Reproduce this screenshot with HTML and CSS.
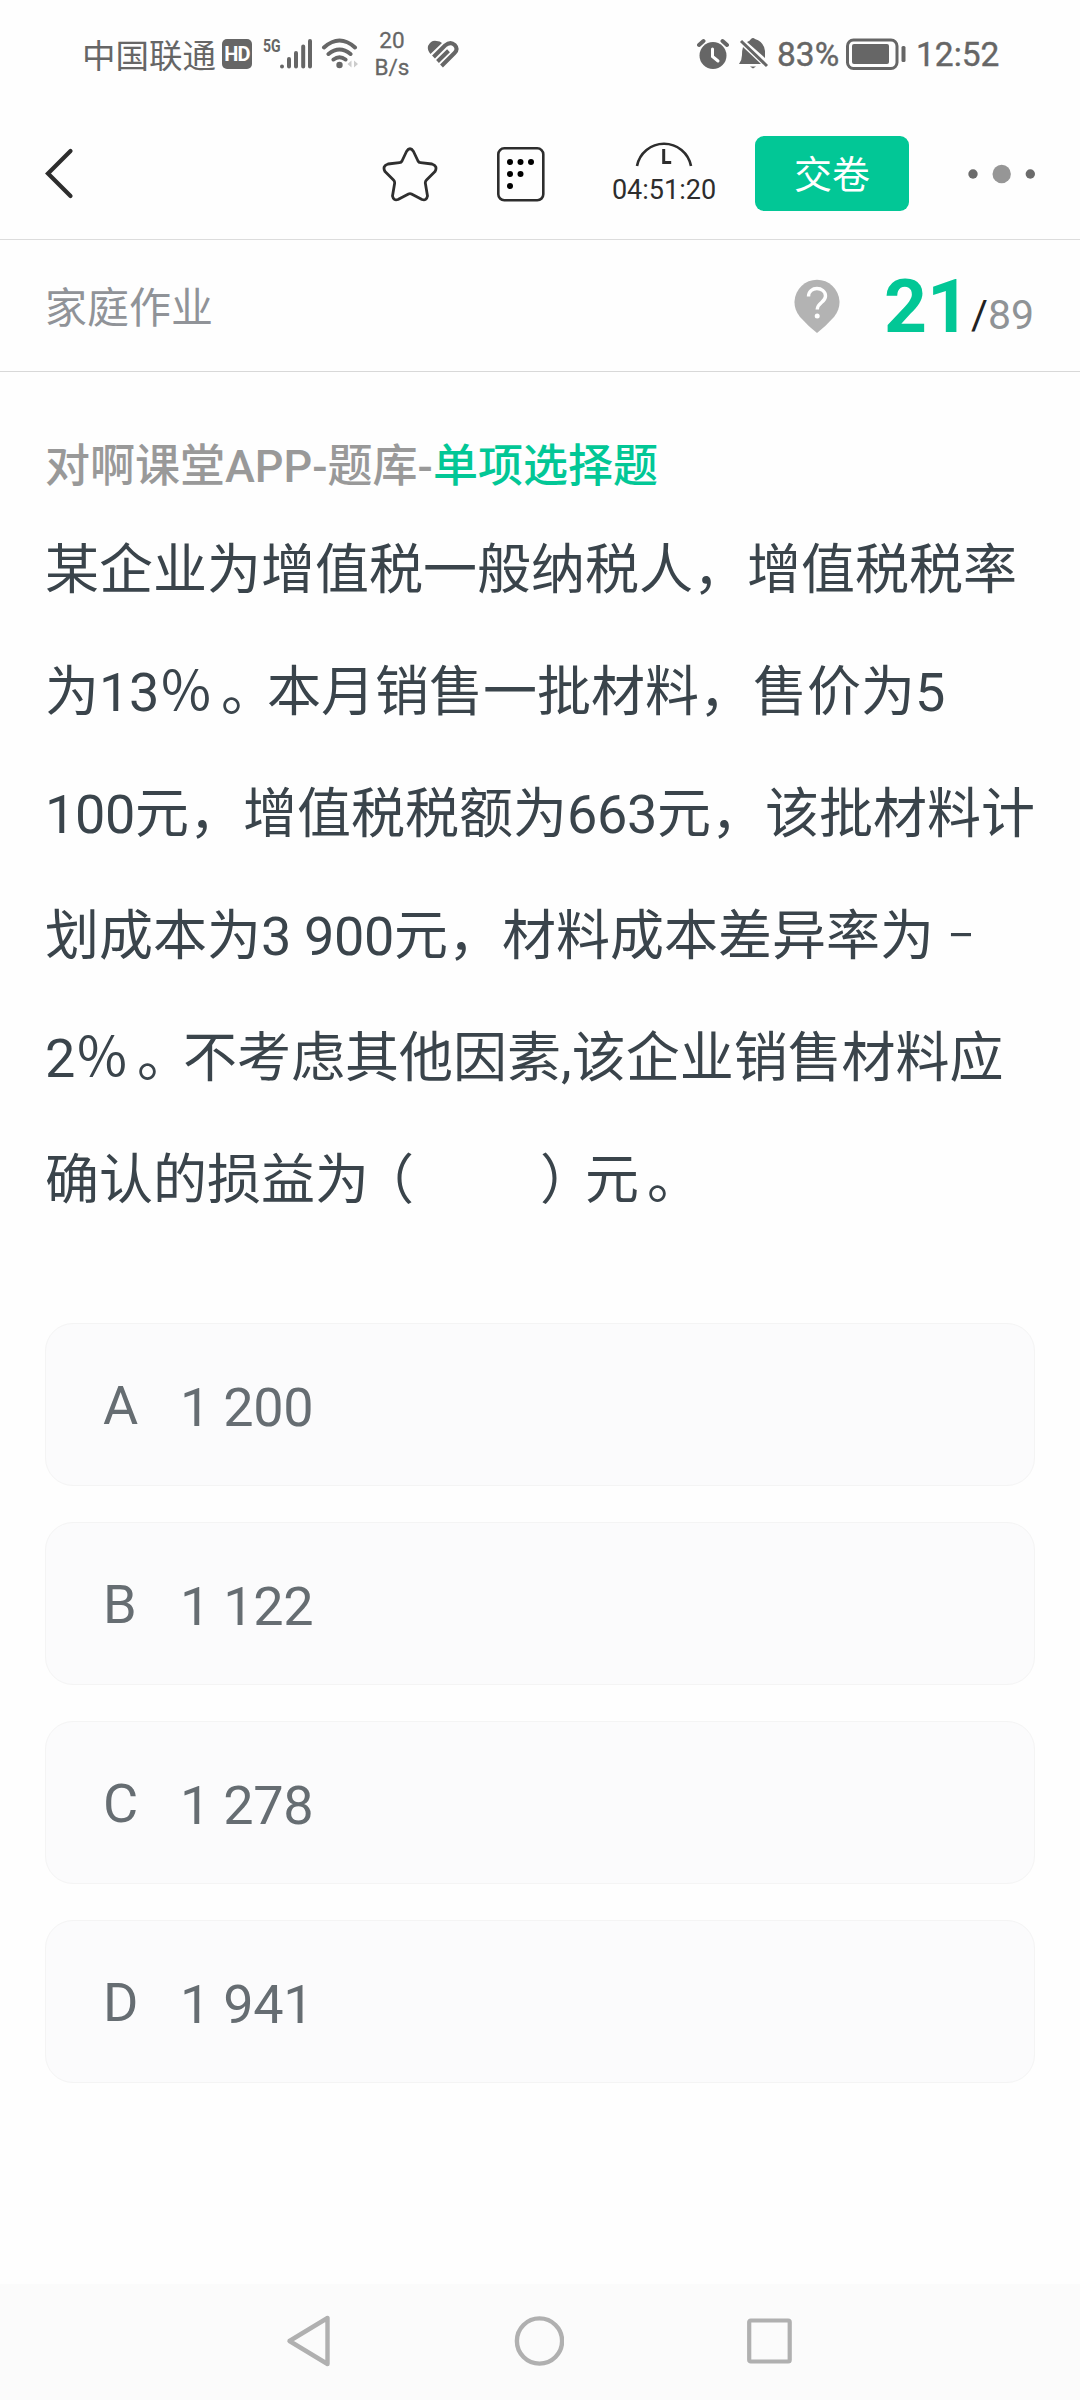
FILE: index.html
```html
<!DOCTYPE html>
<html lang="zh-CN">
<head>
<meta charset="utf-8">
<title>家庭作业</title>
<link rel="stylesheet" href="styles.css">
</head>
<body>
<div class="screen">
  <header class="status">
    <div class="status-left">
      <span class="carrier">中国联通</span>
      <span class="hd">HD</span>
      <span class="net">5G</span>
      <svg class="signal" width="32" height="32" viewBox="0 0 32 32" stroke="#666" stroke-width="4" stroke-linecap="round"><path d="M2 28.5v.1M9 21v7.500M16 15v13.500M23.200 8.500v20M30 3v25.500"/></svg>
      <svg class="wifi" width="40" height="34" viewBox="0 0 40 34" fill="none" stroke="#666" stroke-width="4" stroke-linecap="round"><path d="M3 10.500q15.500-14 31 0M7.500 17q11-9 22 0M12.500 22.500q6-4.500 12 0"/><circle cx="18.500" cy="28" r="3.200" fill="#666" stroke="none"/><path d="M30.500 23.500v7l-4-3.500zM33 23.500v7l4-3.500z" fill="#ccc" stroke="none"/></svg>
      <span class="speed"><span>20</span><span>B/s</span></span>
      <svg class="health" width="32" height="28" viewBox="0 0 32 28" fill="none" stroke="#666" stroke-width="4"><path d="M3.500 14Q0 10 1 6 4 0 9.500 1 13 1 15 3z" fill="#666" stroke="none"/><path d="M6.500 17L18 5.500Q23.500 1 27.700 5 31.500 9 27.500 13L14.500 26M10.500 21.500L21.500 10.800"/></svg>
    </div>
    <div class="status-right">
      <svg width="32" height="32" viewBox="0 0 32 32"><circle cx="16" cy="17.500" r="13.500" fill="#666"/><path d="M2 7l4.500-4M30 7l-4.500-4" stroke="#666" stroke-width="4" stroke-linecap="round"/><path d="M15.500 11v7.500l5.500 4.500" fill="none" stroke="#fff" stroke-width="3" stroke-linecap="round"/></svg>
      <svg class="bell" width="30" height="32" viewBox="0 0 30 32" fill="#666"><path d="M4 9L22 26H0q3-4 3-9 0-5 1-8zM8 4q3-1 4-3 2-2 4 0 9 3 10 12v7z"/><path d="M2 3l26 25" stroke="#666" stroke-width="3"/><path d="M11 28.500h6l-3 2z"/></svg>
      <span class="pct">83%</span>
      <svg class="battery" width="60" height="32" viewBox="0 0 60 32"><rect x="1.500" y="2" width="49.500" height="28.500" rx="6" fill="none" stroke="#666" stroke-width="3"/><rect x="6" y="6" width="37" height="20" rx="2" fill="#666"/><rect x="55.500" y="8" width="4" height="16" rx="1.500" fill="#666"/></svg>
      <span class="clock">12:52</span>
    </div>
  </header>

  <nav class="toolbar">
    <svg class="back" width="30" height="54" viewBox="0 0 30 54" fill="none" stroke="#2d2d2d" stroke-width="4.200" stroke-linecap="round"><path d="M26.500 4L4 26.500 26.500 49"/></svg>
    <svg class="star" width="56" height="56" viewBox="0 0 56 56" fill="none" stroke="#2f2f2f" stroke-width="2.800" stroke-linejoin="round"><path d="M24.500 5.500Q28 0 31.500 5.500L36 15Q36.800 16.500 38.500 16.700L50 18Q56 20 53 25.500L44.500 34Q43 35.500 43.400 37.500L45.500 50Q44.500 55 40 53.500L29.500 48Q28 47.200 26.500 48L16 53.500Q11.500 55 10.500 50L12.600 37.500Q13 35.500 11.500 34L3 25.500Q0 20 6 18L17.500 16.700Q19.200 16.500 20 15z"/></svg>
    <svg class="sheet" width="48" height="56" viewBox="0 0 48 56"><rect x="1.300" y="2.300" width="45" height="52" rx="6" fill="none" stroke="#2d2d2d" stroke-width="2.600"/><g fill="#000"><circle cx="13" cy="16" r="3"/><circle cx="23.500" cy="16" r="3"/><circle cx="34" cy="16" r="3"/><circle cx="13" cy="28" r="3"/><circle cx="23.500" cy="28" r="3"/><circle cx="13" cy="40" r="3"/></g></svg>
    <div class="timer">
      <svg width="60" height="30" viewBox="0 0 60 30" fill="none" stroke="#2d2d2d"><path d="M3 29A27.500 27.500 0 0 1 57 29" stroke-width="2.600"/><path d="M29.700 12v13.500h7.500" stroke-width="3"/></svg>
      <span>04:51:20</span>
    </div>
    <button class="submit">交卷</button>
    <svg class="more" width="68" height="20" viewBox="0 0 68 20"><circle cx="5" cy="10" r="4.700" fill="#6b6b6b"/><circle cx="33.700" cy="10" r="9.200" fill="#969696"/><circle cx="62.300" cy="10" r="4.700" fill="#6b6b6b"/></svg>
  </nav>

  <section class="subhead">
    <span class="name">家庭作业</span>
    <svg class="pin" width="46" height="56" viewBox="0 0 46 56"><path d="M23 55Q14 48 6 39A22.500 22.500 0 1 1 40 39Q32 48 23 55z" fill="#b3b3b3"/><path d="M14.500 18.500c0-11 17-10 17-.5 0 6.500-8.300 6.500-8.300 13.500" fill="none" stroke="#fff" stroke-width="3.400"/><circle cx="23.200" cy="38" r="2.500" fill="#fff"/></svg>
    <span class="current">21</span><span class="slash">/</span><span class="total">89</span>
  </section>

  <main class="content">
    <p class="source">对啊课堂APP-题库-<b>单项选择题</b></p>
    <p class="question">某企业为增值税一般纳税人，增值税税率<br>为<span class="num">13</span>％<span class="stop">。</span>本月销售一批材料，售价为<span class="num">5</span><br><span class="num">100</span>元，增值税税额为<span class="num">663</span>元，该批材料计<br>划成本为<span class="num">3 900</span>元，材料成本差异率为<span class="minus">﹣</span><br><span class="num">2</span>％<span class="stop">。</span>不考虑其他因素,该企业销售材料应<br>确认的损益为<span class="open">（</span>　　<span class="close">）</span>元<span class="stop">。</span></p>
    <ul class="options">
      <li><span class="key">A</span><span class="val">1 200</span></li>
      <li><span class="key">B</span><span class="val">1 122</span></li>
      <li><span class="key">C</span><span class="val">1 278</span></li>
      <li><span class="key">D</span><span class="val">1 941</span></li>
    </ul>
  </main>

  <footer class="navbar">
    <svg width="46" height="54" viewBox="0 0 46 54" fill="none" stroke="#b0b0b0" stroke-width="4.400" stroke-linejoin="round"><path d="M42.500 4v46L4.500 27z"/></svg>
    <svg width="50" height="50" viewBox="0 0 50 50" fill="none" stroke="#b0b0b0" stroke-width="4.400"><circle cx="25.500" cy="25" r="22.600"/></svg>
    <svg width="46" height="46" viewBox="0 0 46 46" fill="none" stroke="#b0b0b0" stroke-width="4.200"><rect x="2.200" y="2.500" width="40.500" height="41" rx="1.500"/></svg>
  </footer>
</div>
</body>
</html>
```
FILE: styles.css
```css
* { box-sizing: border-box; }
body, p, ul { margin: 0; padding: 0; }
body {
  background: #fefefe;
  font-family: Roboto, "Noto Sans CJK SC", sans-serif;
  text-spacing-trim: space-all;
}
svg { display: block; flex: none; }
.screen { width: 1080px; height: 2400px; display: flex; flex-direction: column; }

.status {
  height: 108px; padding: 0 80px 0 82px;
  display: flex; justify-content: space-between; align-items: flex-start;
  color: #666; white-space: nowrap;
}
.status-left, .status-right { height: 108px; display: flex; align-items: center; }
.carrier { width: 134px; margin-bottom: 2px; font-size: 33.500px; }
.hd {
  width: 30px; height: 30px; margin-left: 6px; border-radius: 5px;
  background: #666; color: #fff; text-align: center;
  font: 700 20px/30px Roboto, sans-serif; letter-spacing: -0.8px;
}
.net {
  width: 17px; margin: 0 0 17px 11px;
  font: 700 18px/18px Roboto, sans-serif;
  transform: scaleX(.78); transform-origin: left;
}
.wifi { margin-left: 9px; }
.speed {
  width: 44px; margin-left: 9px;
  display: flex; flex-direction: column; text-align: center;
  font-size: 22.500px; line-height: 27px;
  -webkit-text-stroke: .3px #666;
}
.health { margin-left: 13px; }
.bell { margin-left: 10px; }
.pct, .clock { font-size: 33.500px; line-height: 40px; -webkit-text-stroke: .4px #666; }
.pct { width: 62px; margin: 2px 0 0 8px; }
.battery { margin-left: 7px; }
.clock { width: 84px; margin: 2px 0 0 10px; }

.toolbar {
  height: 132px; padding: 0 44px; border-bottom: 1px solid #dcdcdc;
  display: flex; align-items: center;
}
.star { margin-left: 308px; }
.sheet { margin-left: 59px; }
.timer {
  width: 104px; margin-left: 67px;
  display: flex; flex-direction: column; align-items: center;
  color: #2d2d2d; font-size: 27px; line-height: 40px;
}
.timer svg { margin-top: -4px; }
.timer span { margin: 3px 0 -4px; }
.submit {
  width: 154px; height: 75px; margin-left: 39px; padding: 4px 0 0;
  border: 0; border-radius: 9px; background: #02c796; color: #fff;
  font: 400 38px/71px Roboto, "Noto Sans CJK SC", sans-serif;
}
.more { margin-left: auto; }

.subhead {
  height: 132px; padding: 0 46px 0 45px; border-bottom: 1px solid #d8d8d8;
  display: flex; align-items: center;
}
.name { margin: 0 auto 2px 0; color: #909398; font-size: 42px; }
.pin { margin-right: 44px; }
.current { margin-right: 1px; color: #02c796; font-size: 75px; font-weight: 700; line-height: 80px; }
.slash { margin-top: 18px; color: #222; font-size: 41px; }
.total { margin-top: 18px; color: #8f9396; font-size: 41px; }

.content { flex: 1; padding: 65px 45px 0; }
.source {
  height: 72px; color: #999; font-size: 45px; font-weight: 500; line-height: 59px;
}
.source b { color: #02c796; font-weight: 500; }
.question { padding-top: 1px; color: #3a444b; font-size: 54px; line-height: 122px; white-space: nowrap; }
.num { letter-spacing: -0.350px; }
.stop { margin-left: 8px; letter-spacing: -8px; }
.open { margin: 0 9px 0 18px; font-feature-settings: "halt"; }
.close { margin-left: 9px; letter-spacing: -9px; }
.minus { line-height: 0; vertical-align: 7px; }
.options { margin-top: 81px; display: flex; flex-direction: column; gap: 36px; list-style: none; }
.options li {
  height: 163px; padding-left: 57px; border: 1px solid #f4f4f4; border-radius: 28px;
  background: #fbfbfc; color: #666d72; font-size: 54px;
  display: flex; align-items: center;
}
.key { width: 77px; margin-top: 1px; }
.val { margin-top: 5px; letter-spacing: -0.300px; }

.navbar {
  height: 116px; padding: 0 287px 2px 285px; background: #fbfbfb;
  display: flex; justify-content: space-between; align-items: center;
}
```
